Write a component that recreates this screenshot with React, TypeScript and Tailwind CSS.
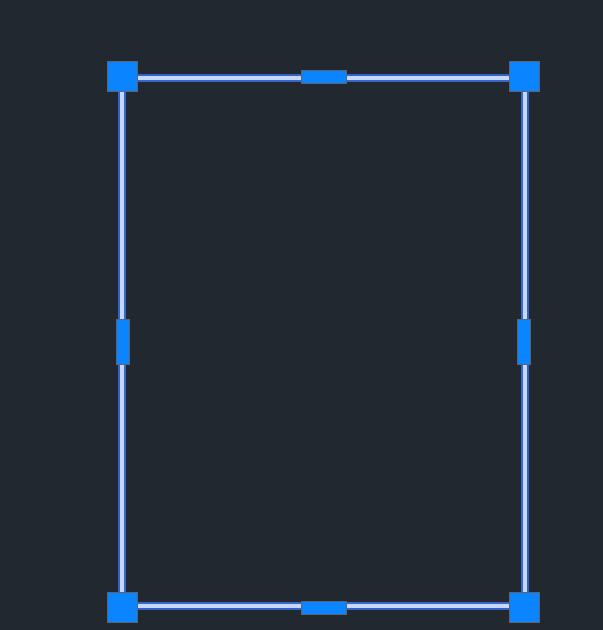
import React from "react";

const Corner = () => (
  <div className="w-[31px] h-[31px] bg-[#0a84ff] border border-[#5b6472]" />
);
const HMid = () => (
  <div className="w-[46px] h-[14px] bg-[#0a84ff] border border-[#5b6472]" />
);
const VMid = () => (
  <div className="w-[14px] h-[46px] bg-[#0a84ff] border border-[#5b6472]" />
);

export default function App() {
  return (
    <div className="w-[603px] h-[630px] bg-[#22282f] overflow-hidden pl-[118px] pt-[74px]">
      <div className="relative w-[411px] h-[536px]">
        <div className="w-full h-full border-2 border-[#3363c6]">
          <div className="w-full h-full border-4 border-[#c6d7fe]">
            <div className="w-full h-full border-2 border-[#3868cc]" />
          </div>
        </div>
        <div className="absolute -left-[11px] -right-[11px] -top-[13px] -bottom-[13px] flex flex-col justify-between">
          <div className="flex justify-between items-center">
            <Corner />
            <HMid />
            <Corner />
          </div>
          <div className="flex justify-between items-center px-[9px]">
            <VMid />
            <VMid />
          </div>
          <div className="flex justify-between items-center">
            <Corner />
            <HMid />
            <Corner />
          </div>
        </div>
      </div>
    </div>
  );
}
